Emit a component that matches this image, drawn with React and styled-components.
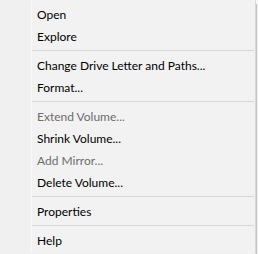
import React from "react";
import styled, { createGlobalStyle } from "styled-components";

const Global = createGlobalStyle`
  html, body { margin: 0; padding: 0; background: #f7f7f7; }
  body { font-family: "Segoe UI", Lato, "Liberation Sans", Arial, sans-serif; }
`;

const Frame = styled.div`
  width: 256px;
`;

const Menu = styled.div`
  position: relative;
  width: 256px;
  box-sizing: border-box;
  background: #f2f2f2;
  border: 1px solid #f0f0f0;
  border-right-color: #d8d8d8;
  padding: 2px 0;
  box-shadow: 2px 3px 1px -1px rgba(0, 0, 0, 0.2);
  display: flex;
  flex-direction: column;
`;

const Gutter = styled.div`
  position: absolute;
  left: 0;
  top: 0;
  bottom: 0;
  width: 30px;
  background: #f0f0f0;
  border-right: 1px solid #f9f9f9;
`;

const Item = styled.div`
  position: relative;
  height: 22px;
  display: flex;
  align-items: center;
  padding-left: 36px;
  padding-top: 1px;
  box-sizing: border-box;
  font-family: Lato, "Liberation Sans", Arial, sans-serif;
  font-size: 12px;
  color: ${(p) => (p.$disabled ? "#6d6d6d" : "#000000")};
  white-space: nowrap;
`;

const Separator = styled.div`
  position: relative;
  height: 7px;
  display: flex;
  align-items: center;
  margin-left: 31px;
  margin-right: 1px;
  &::after {
    content: "";
    flex: 1;
    height: 1px;
    background: #d7d7d7;
  }
`;

const entries = [
  { label: "Open" },
  { label: "Explore" },
  { sep: true },
  { label: "Change Drive Letter and Paths..." },
  { label: "Format..." },
  { sep: true },
  { label: "Extend Volume...", disabled: true },
  { label: "Shrink Volume..." },
  { label: "Add Mirror...", disabled: true },
  { label: "Delete Volume..." },
  { sep: true },
  { label: "Properties" },
  { sep: true },
  { label: "Help" },
];

export default function App() {
  return (
    <Frame>
      <Global />
      <Menu>
        <Gutter />
        {entries.map((e, i) =>
          e.sep ? (
            <Separator key={i} />
          ) : (
            <Item key={i} $disabled={e.disabled}>
              {e.label}
            </Item>
          )
        )}
      </Menu>
    </Frame>
  );
}
